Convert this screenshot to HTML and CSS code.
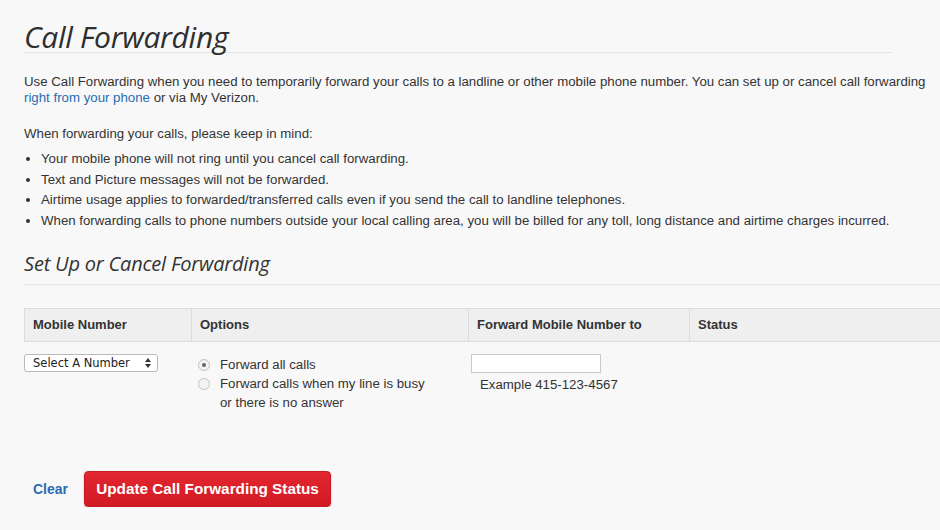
FILE: index.html
```html
<!DOCTYPE html>
<html>
<head>
<meta charset="utf-8">
<link rel="stylesheet" href="styles.css">
</head>
<body>
<div class="page">
  <h1 class="title">Call Forwarding</h1>
  <p class="intro">Use Call Forwarding when you need to temporarily forward your calls to a landline or other mobile phone number. You can set up or cancel call forwarding <a class="link" href="#">right from your phone</a> or via My Verizon.</p>
  <p class="lead">When forwarding your calls, please keep in mind:</p>
  <ul class="notes">
    <li>Your mobile phone will not ring until you cancel call forwarding.</li>
    <li>Text and Picture messages will not be forwarded.</li>
    <li>Airtime usage applies to forwarded/transferred calls even if you send the call to landline telephones.</li>
    <li>When forwarding calls to phone numbers outside your local calling area, you will be billed for any toll, long distance and airtime charges incurred.</li>
  </ul>
  <h2 class="subtitle">Set Up or Cancel Forwarding</h2>
  <div class="table">
    <div class="thead">
      <div class="th">Mobile Number</div>
      <div class="th">Options</div>
      <div class="th">Forward Mobile Number to</div>
      <div class="th">Status</div>
    </div>
    <div class="trow">
      <div class="td">
        <div class="select">
          <span>Select A Number</span>
          <svg class="arrows" width="6" height="10" viewBox="0 0 6 10"><path d="M3 0 L6 4 L0 4 Z M0 6 L6 6 L3 10 Z" fill="#333"/></svg>
        </div>
      </div>
      <div class="td options">
        <label class="radio-row"><span class="radio checked"></span><span>Forward all calls</span></label>
        <label class="radio-row"><span class="radio"></span><span>Forward calls when my line is busy<br>or there is no answer</span></label>
      </div>
      <div class="td">
        <div class="input"></div>
        <div class="example">Example 415-123-4567</div>
      </div>
      <div class="td"></div>
    </div>
  </div>
  <div class="actions">
    <a class="clear" href="#">Clear</a>
    <button class="submit">Update Call Forwarding Status</button>
  </div>
</div>
</body>
</html>
```
FILE: styles.css
```css
html, body {
  margin: 0;
  padding: 0;
  background: #f8f8f8;
  overflow: hidden;
}
.page {
  padding: 22px 0 0 24px;
  font-family: "Liberation Sans", Arial, sans-serif;
  font-size: 13.25px;
  color: #333;
}
.title {
  margin: 0 48px 0 0;
  font-family: "Open Sans", sans-serif;
  font-style: italic;
  font-weight: 400;
  font-size: 30px;
  line-height: 30px;
  color: #2e2e2e;
  letter-spacing: -0.3px;
  padding-bottom: 0;
  border-bottom: 1px solid #e3e3e3;
}
.intro {
  margin: 21px 0 0 0;
  line-height: 16px;
  padding-right: 4px;
}
.link {
  color: #1f6db3;
  text-decoration: none;
}
.lead {
  margin: 20px 0 0 0;
  line-height: 16px;
}
.notes {
  margin: 7px 0 0 0;
  padding: 0 0 0 17px;
  line-height: 20.5px;
}
.subtitle {
  margin: 19px 0 0 0;
  font-family: "Open Sans", sans-serif;
  font-style: italic;
  font-weight: 400;
  font-size: 20px;
  line-height: 28px;
  color: #333;
  padding-bottom: 6px;
  border-bottom: 1px solid #e3e3e3;
  letter-spacing: -0.2px;
}
.table {
  margin-top: 23px;
}
.thead, .trow {
  display: grid;
  grid-template-columns: 166px 277px 221px 1fr;
}
.thead {
  background: #efefef;
  border-top: 1px solid #dcdcdc;
  border-bottom: 1px solid #dcdcdc;
  border-left: 1px solid #dcdcdc;
  height: 32px;
}
.th {
  font-size: 13px;
  font-weight: bold;
  line-height: 32px;
  padding-left: 8px;
  border-left: 1px solid #dcdcdc;
}
.th:first-child {
  border-left: none;
}
.td {
  padding-top: 12px;
}
.select {
  display: flex;
  align-items: center;
  justify-content: space-between;
  width: 118px;
  height: 16px;
  padding: 0 6px 0 8px;
  border: 1px solid #b9b9b9;
  border-radius: 3px;
  background: #fff;
  font-family: "DejaVu Sans", sans-serif;
  font-size: 11.5px;
  color: #222;
}
.options {
  padding-left: 8px;
  padding-top: 13px;
}
.radio-row {
  display: flex;
  align-items: flex-start;
  gap: 10px;
  line-height: 19px;
}
.radio {
  flex: none;
  width: 10px;
  height: 10px;
  margin-top: 4px;
  border-radius: 50%;
  border: 1px solid #c4c4c4;
  background: #f3f3f3;
  position: relative;
}
.radio.checked::after {
  content: "";
  position: absolute;
  left: 3px;
  top: 3px;
  width: 4px;
  height: 4px;
  border-radius: 50%;
  background: #666;
}
.input {
  margin-left: 4px;
  width: 128px;
  height: 17px;
  background: #fff;
  border: 1px solid #c9c9c9;
}
.example {
  margin: 4px 0 0 13px;
  line-height: 16px;
}
.actions {
  display: flex;
  align-items: center;
  gap: 16px;
  margin-top: 59px;
  padding-left: 9px;
}
.clear {
  color: #2c6cb0;
  font-weight: bold;
  font-size: 14px;
  text-decoration: none;
}
.submit {
  width: 247px;
  height: 36px;
  border: 1px solid #c41a24;
  border-radius: 4px;
  background: linear-gradient(#e32630, #d11a24);
  color: #fff;
  font-family: "Liberation Sans", Arial, sans-serif;
  font-weight: bold;
  font-size: 15.3px;
  box-shadow: 0 1px 2px rgba(0,0,0,0.25);
}
```
